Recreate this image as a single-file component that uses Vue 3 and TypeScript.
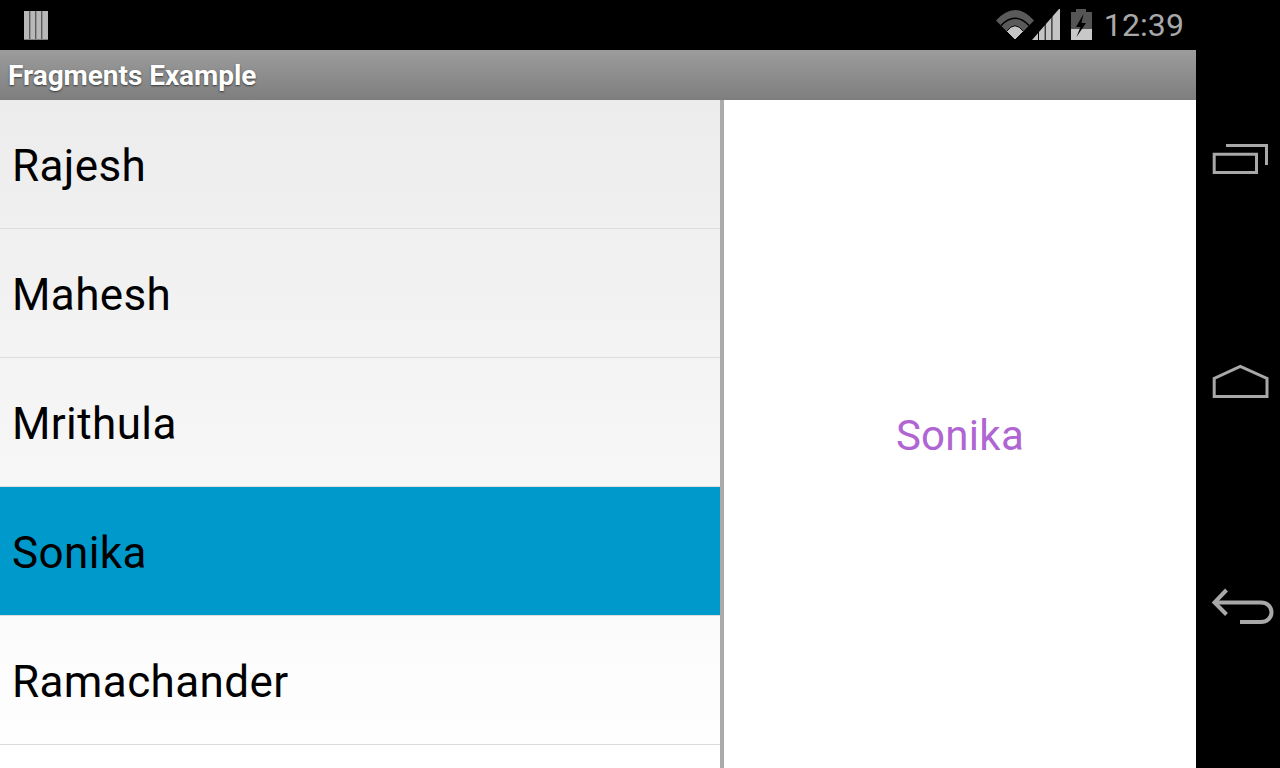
<template>
  <div class="device">
    <div class="screen">
      <!-- Status bar -->
      <div class="status-bar">
        <svg class="notif-icon" width="24" height="30" viewBox="0 0 24 30">
          <path d="M0 1h5.500v29H0zM6.200 1h5.300v29H6.200zM12.200 1h5.300v29h-5.300zM18.200 1H24v29h-5.800z" fill="#b8b8b8" />
          <path d="M0 29h24v1H0z" fill="#808080" />
        </svg>
        <div class="status-right">
          <svg width="38" height="30" viewBox="0 0 38 30">
            <path d="M0 10.500Q19-10.500 38 10.500L19 30z" fill="#5a5a5a" />
            <path d="M5 15.500Q19 1 33 15.500" fill="none" stroke="#000" stroke-width="1.500" />
            <path d="M10.500 21.500Q19 10 27.500 21.500L19 30z" fill="#c4c4c4" stroke="#000" stroke-width="1" />
          </svg>
          <svg class="signal" width="28" height="31" viewBox="0 0 28 31">
            <path d="M0 31 27 0h1v31z" fill="#c4c4c4" />
            <path d="M6 31V22h1v9zM12.700 31V14h1v17zM19.400 31V6h1v25z" fill="#000" />
          </svg>
          <svg class="battery" width="21" height="31" viewBox="0 0 21 31">
            <path d="M5 0h10v3h6v28H0V3h5z" fill="#555" />
            <path d="M0 20h21v11H0z" fill="#c8c8c8" />
            <path d="M12.500 5 5 18h4.500L5.500 28 15 14h-4.500z" fill="#000" />
          </svg>
          <span class="clock">12:39</span>
        </div>
      </div>

      <!-- Action bar -->
      <div class="action-bar">Fragments Example</div>

      <div class="content">
        <ul class="name-list">
          <li
            v-for="name in names"
            :key="name"
            class="name-row"
            :class="{ 'name-row--active': name === selected }"
          >
            {{ name }}
          </li>
        </ul>
        <div class="detail">
          <span class="detail-text">{{ selected }}</span>
        </div>
      </div>
    </div>

    <!-- Navigation bar -->
    <nav class="nav-bar">
      <svg width="72" height="32" viewBox="0 0 72 32" fill="none" stroke="#a8a8a8" stroke-width="3">
        <path d="M12.200 11.200h42.300v18.300H12.200z" />
        <path d="M24 2.500h40.500V22" />
      </svg>
      <svg width="72" height="36" viewBox="0 0 72 36" fill="none" stroke="#a8a8a8" stroke-width="3">
        <path d="M12.200 33.500v-18l26.100-12 26.700 12v18z" />
      </svg>
      <svg width="72" height="38" viewBox="0 0 72 38" fill="none" stroke="#a8a8a8" stroke-width="4">
        <path d="M24.500 3 12.500 15.500l12 12" />
        <path d="M13 15.500h46c6 0 10.500 4 10.500 9.750S65 35 59 35H38" />
      </svg>
    </nav>
  </div>
</template>

<script setup lang="ts">
const names: string[] = ['Rajesh', 'Mahesh', 'Mrithula', 'Sonika', 'Ramachander']
const selected = 'Sonika'
</script>

<style>
html,
body {
  margin: 0;
  background: #000;
  overflow: hidden;
}
</style>

<style scoped>
.device {
  display: flex;
  width: 1280px;
  height: 768px;
  font-family: Roboto, "Liberation Sans", sans-serif;
  background: #000;
}

.screen {
  width: 1196px;
  display: flex;
  flex-direction: column;
}

.status-bar {
  height: 50px;
  flex-shrink: 0;
  display: flex;
  align-items: center;
  justify-content: space-between;
  padding: 0 12px 0 24px;
  background: #000;
}

.notif-icon {
  margin-top: -1px;
}

.status-right {
  display: flex;
  align-items: center;
}

.signal {
  margin-left: -2px;
  margin-top: -1px;
}

.battery {
  margin-left: 11px;
  margin-top: -1px;
}

.clock {
  margin-left: 12px;
  font-size: 32px;
  font-weight: 400;
  letter-spacing: 0.1px;
  color: #a8a8a8;
}

.action-bar {
  height: 50px;
  flex-shrink: 0;
  box-sizing: border-box;
  padding-left: 8px;
  line-height: 51px;
  font-size: 28px;
  font-weight: 700;
  letter-spacing: -0.05px;
  color: #fff;
  background: linear-gradient(#9c9c9c, #7e7e7e);
  text-shadow: 0 1px 2px rgba(0, 0, 0, 0.6);
}

.content {
  flex: 1;
  display: flex;
  min-height: 0;
}

.name-list {
  width: 720px;
  margin: 0;
  padding: 0;
  list-style: none;
  background: linear-gradient(#ececec, #fff);
  border-right: 4px solid #aaa;
}

.name-row {
  height: 128px;
  box-sizing: content-box;
  border-bottom: 1px solid #dcdcdc;
  padding-left: 12px;
  line-height: 133px;
  font-size: 44px;
  letter-spacing: 0.4px;
  color: #000;
}

.name-row--active {
  background: #0099cc;
}

.detail {
  flex: 1;
  display: flex;
  align-items: center;
  justify-content: center;
  padding-top: 3px;
  background: #fff;
}

.detail-text {
  font-size: 42px;
  letter-spacing: 0.3px;
  color: #b066d2;
}

.nav-bar {
  width: 84px;
  display: flex;
  flex-direction: column;
  align-items: center;
  background: #000;
  padding-top: 143px;
  box-sizing: border-box;
  gap: 188px;
}
</style>
